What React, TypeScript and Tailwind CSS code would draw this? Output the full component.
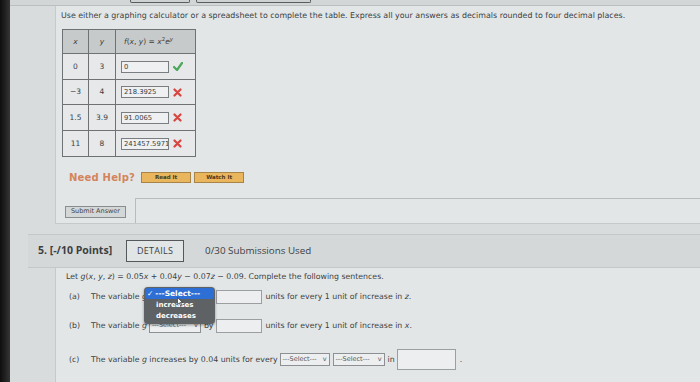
import React from "react";

function Check() {
  return (
    <svg width="10" height="9" viewBox="0 0 10 9">
      <path d="M1 5 L4 8 L9 1" stroke="#4da85c" strokeWidth="2.2" fill="none" strokeLinecap="round" strokeLinejoin="round" />
    </svg>
  );
}
function Cross() {
  return (
    <svg width="9" height="9" viewBox="0 0 9 9">
      <path d="M1.5 1.5 L7.5 7.5 M7.5 1.5 L1.5 7.5" stroke="#d9443f" strokeWidth="2.2" strokeLinecap="round" />
    </svg>
  );
}

function SmallSelect({ w }: { w: string }) {
  return (
    <div className={`${w} h-[13px] border border-[#8d9092] bg-[#eceeef] flex items-center justify-between px-[2px] text-[6.5px] text-[#555]`}>
      <span>---Select---</span>
      <span>v</span>
    </div>
  );
}

const rows = [
  { x: "0", y: "3", v: "0", ok: true, h: "h-[26px]" },
  { x: "\u22123", y: "4", v: "218.3925", ok: false, h: "h-[25px]" },
  { x: "1.5", y: "3.9", v: "91.0065", ok: false, h: "h-[26px]" },
  { x: "11", y: "8", v: "241457.5971", ok: false, h: "h-[26px]" },
];

export default function App() {
  return (
    <div className="w-[700px] h-[382px] overflow-hidden flex bg-[#d9dcdd] text-[#3b3f42] font-['DejaVu_Sans',sans-serif]">
      <div className="w-[10px] bg-gradient-to-r from-[#0e0e0e] to-[#353535]" />
      <div className="flex-1 flex flex-col">
        {/* top bar */}
        <div className="h-[6px] bg-[#d3d6d7] border-b border-[#bcbfc0] flex items-start">
          <div className="ml-[120px] w-[60px] h-[3px] border-b border-x border-[#5a5d5f] bg-[#cfd2d3] rounded-b-[2px]" />
          <div className="ml-[6px] w-[115px] h-[3px] border-b border-x border-[#5a5d5f] bg-[#cfd2d3] rounded-b-[2px]" />
        </div>

        {/* panel 1 */}
        <div className="ml-[45px] h-[218px] bg-[#e3e6e7] border-l border-b border-[#c6c9ca] flex flex-col">
          <p className="mt-[5px] ml-[5px] text-[7.9px] leading-[10px] whitespace-nowrap">
            Use either a graphing calculator or a spreadsheet to complete the table. Express all your answers as decimals rounded to four decimal places.
          </p>
          <table className="self-start mt-[8px] ml-[6px] border-collapse text-[7.5px]">
            <thead>
              <tr className="h-[24px] bg-[#c7caca]">
                <th className="w-[26px] border border-[#6f7274] font-normal italic">x</th>
                <th className="w-[27px] border border-[#6f7274] font-normal italic">y</th>
                <th className="w-[80px] border border-[#6f7274] font-normal text-left pl-[8px] whitespace-nowrap">
                  <i>f</i>(<i>x</i>, <i>y</i>) = <i>x</i><sup className="text-[5.5px]">2</sup><i>e</i><sup className="text-[5.5px] italic">y</sup>
                </th>
              </tr>
            </thead>
            <tbody>
              {rows.map((r, i) => (
                <tr key={i} className={`${r.h} bg-[#e6e8e9]`}>
                  <td className="border border-[#6f7274] text-center">{r.x}</td>
                  <td className="border border-[#6f7274] text-center">{r.y}</td>
                  <td className="border border-[#6f7274] pl-[5px] pr-[8px]">
                    <div className="flex items-center gap-[4px]">
                      <div className="w-[48px] h-[12px] border border-[#7b7e80] bg-[#eef0f1] overflow-hidden whitespace-nowrap text-[6.8px] leading-[10px] pl-[2px]">
                        {r.v}
                      </div>
                      {r.ok ? <Check /> : <Cross />}
                    </div>
                  </td>
                </tr>
              ))}
            </tbody>
          </table>
          <div className="mt-[14px] ml-[13px] flex items-center h-[12px]">
            <span className="text-[10px] font-bold text-[#d3845c] tracking-[0.2px]">Need Help?</span>
            <div className="ml-[6px] w-[50px] h-[11px] bg-[#e9b55d] border border-[#a88546] flex items-center justify-center text-[5.5px] font-bold text-[#4a3a20]">Read It</div>
            <div className="ml-[3px] w-[50px] h-[11px] bg-[#e9b55d] border border-[#a88546] flex items-center justify-center text-[5.5px] font-bold text-[#4a3a20]">Watch It</div>
          </div>
          <div className="mt-auto flex h-[25px]">
            <div className="w-[79px] pl-[9px] pt-[8px]">
              <div className="w-[61px] h-[12px] border border-[#8a8d8f] bg-[#d4d7d8] text-[6.5px] flex items-center justify-center text-[#444] whitespace-nowrap">Submit Answer</div>
            </div>
            <div className="flex-1 border-t border-l border-[#b9bcbd]" />
          </div>
        </div>

        {/* Q5 header band */}
        <div className="mt-[10px] ml-[18px] h-[34px] bg-[#d5d8d9] border-y border-[#c5c8c9] flex items-center pl-[10px] font-['Open_Sans',sans-serif]">
          <span className="text-[10.5px] font-bold">5. [-/10 Points]</span>
          <div className="ml-[14px] w-[58px] h-[22px] border border-[#55585a] bg-[#e2e5e6] flex items-center justify-center text-[9px] tracking-[0.3px]">DETAILS</div>
          <span className="ml-[21px] text-[9.8px]">0/30 Submissions Used</span>
        </div>

        {/* Q5 content */}
        <div className="ml-[45px] flex-1 bg-[#e3e6e7] border-l border-[#c6c9ca] relative text-[7.8px]">
          <p className="mt-[4px] pl-[10px] leading-[10px] whitespace-nowrap">
            Let <i>g</i>(<i>x</i>, <i>y</i>, <i>z</i>) = 0.05<i>x</i> + 0.04<i>y</i> − 0.07<i>z</i> − 0.09. Complete the following sentences.
          </p>
          <div className="mt-[8px] pl-[13px] h-[14px] flex items-center whitespace-nowrap">
            <span className="w-[22px]">(a)</span>
            <span>The variable <i>g</i></span>
            <div className="ml-[2px]"><SmallSelect w="w-[52px]" /></div>
            <span className="ml-[3px]">by</span>
            <div className="ml-[3px] w-[46px] h-[14px] border border-[#9c9fa1] bg-[#eceeef]" />
            <span className="ml-[3px]">units for every 1 unit of increase in <i>z</i>.</span>
          </div>
          <div className="mt-[15px] pl-[13px] h-[14px] flex items-center whitespace-nowrap">
            <span className="w-[22px]">(b)</span>
            <span>The variable <i>g</i></span>
            <div className="ml-[2px]"><SmallSelect w="w-[52px]" /></div>
            <span className="ml-[3px]">by</span>
            <div className="ml-[3px] w-[46px] h-[14px] border border-[#9c9fa1] bg-[#eceeef]" />
            <span className="ml-[3px]">units for every 1 unit of increase in <i>x</i>.</span>
          </div>
          <div className="mt-[16px] pl-[13px] h-[21px] flex items-center whitespace-nowrap">
            <span className="w-[22px]">(c)</span>
            <span>The variable <i>g</i> increases by 0.04 units for every</span>
            <div className="ml-[2px]"><SmallSelect w="w-[50px]" /></div>
            <div className="ml-[3px]"><SmallSelect w="w-[52px]" /></div>
            <span className="ml-[3px]">in</span>
            <div className="ml-[2px] w-[59px] h-[21px] border border-[#9c9fa1] bg-[#eceeef]" />
            <span className="ml-[4px]">.</span>
          </div>

          {/* open dropdown menu */}
          <div className="absolute left-[88px] top-[19px] w-[71px] h-[37px] rounded-[4px] bg-[#5e6264] shadow-[0_1px_3px_rgba(0,0,0,0.4)] p-[1px] text-white text-[7px] font-bold">
            <div className="h-[11px] rounded-[3px] bg-[#2e6fd6] flex items-center pl-[2px] gap-[2px] text-[7.5px]">
              <span>✓</span><span>---Select---</span>
            </div>
            <div className="h-[12px] flex items-center pl-[11px]">increases</div>
            <div className="h-[11px] flex items-center pl-[11px]">decreases</div>
            <svg className="absolute left-[33px] top-[10px]" width="6" height="9" viewBox="0 0 6 9">
              <path d="M0.5 0.5 L0.5 7.5 L2.3 5.8 L3.6 8.5 L4.6 8 L3.4 5.4 L5.5 5.4 Z" fill="#fff" stroke="#222" strokeWidth="0.6" />
            </svg>
          </div>
        </div>
      </div>
    </div>
  );
}
